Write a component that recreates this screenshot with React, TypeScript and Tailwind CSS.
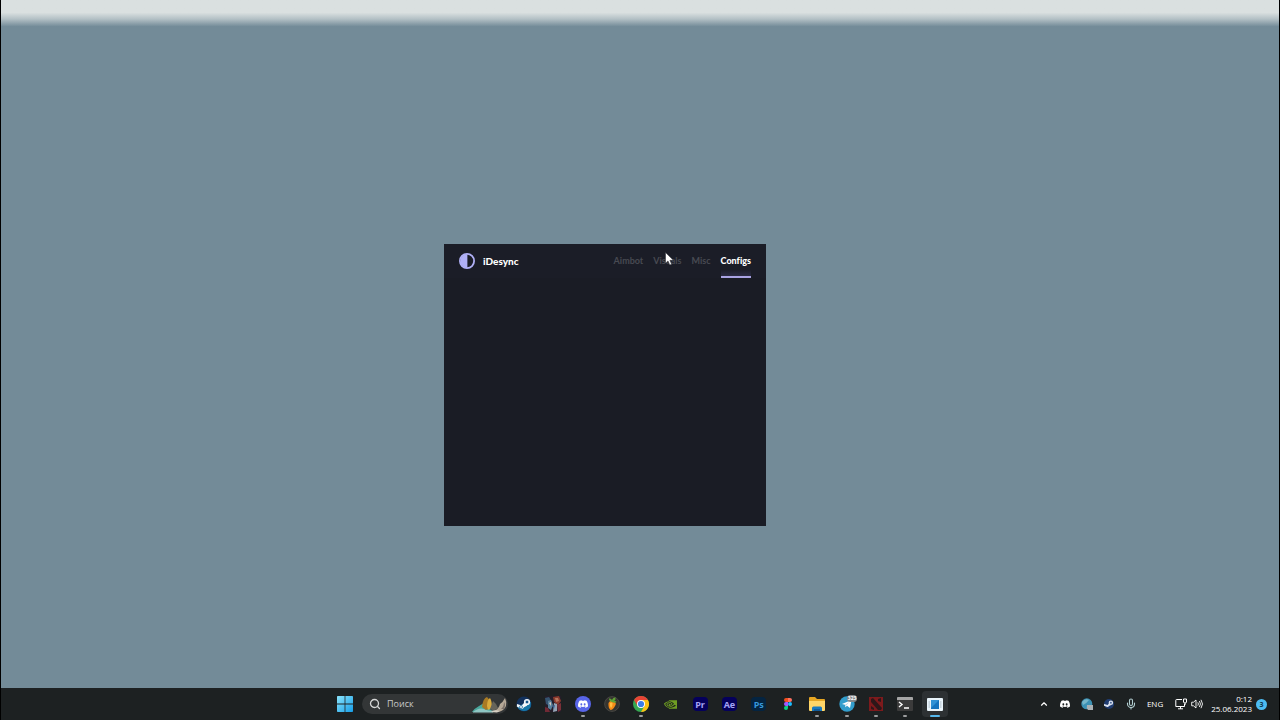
import React, { useState } from "react";
import { ChevronUp, Mic, Search } from "lucide-react";
import { SiDiscord, SiNvidia, SiSteam } from "react-icons/si";

const tabs = ["Aimbot", "Visuals", "Misc", "Configs"];

function StartIcon() {
  return (
    <svg viewBox="0 0 16 16" className="h-4 w-4">
      <defs>
        <linearGradient id="win" x1="0" y1="0" x2="1" y2="1">
          <stop offset="0" stopColor="#8be4fb" />
          <stop offset="1" stopColor="#169ee8" />
        </linearGradient>
      </defs>
      <path
        fill="url(#win)"
        d="M.8 0H7.6V7.6H0V.8Q0 0 .8 0ZM8.4 0H15.2Q16 0 16 .8V7.6H8.4ZM0 8.4H7.6V16H.8Q0 16 0 15.2ZM8.4 8.4H16V15.2Q16 16 15.2 16H8.4Z"
      />
    </svg>
  );
}

function SearchArt() {
  return (
    <svg viewBox="0 0 38 20" className="h-5 w-[38px]">
      <path d="M2 18Q5 14 9 12L14 9L20 15L23 18H2Z" fill="#4aa79c" />
      <path d="M3 18Q9 13 14 15Q19 18 25 16L23 18.5H3Z" fill="#8fc6c3" />
      <path d="M12 13Q13 4 17 3Q20 5 20 14L16 16Z" fill="#a97a24" />
      <path d="M17 12Q17 6 20 4Q22 7 22 14L18 16Z" fill="#d9ab3c" />
      <path d="M20 15L23 7Q26 9 28 14L24 17Z" fill="#66645a" />
      <path d="M24 17Q29 15 30 10Q33 8 35 4Q37 8 36 12Q34 17 28 18Z" fill="#b5a896" />
      <path d="M31 15Q34 13 34 8Q36 11 34 15Z" fill="#7b7068" />
      <path d="M21 18Q24 15 30 17L27 18.5Z" fill="#d5cfc3" />
    </svg>
  );
}

function SteamIcon() {
  return (
    <svg viewBox="0 0 16 16" className="h-4 w-4">
      <circle cx="8" cy="8" r="7.5" fill="#12315c" />
      <path d="M1 10A7.4 7.4 0 0 0 14.6 11L15 6Z" fill="#1777a8" />
      <path d="M1 8L5.8 9.6L8.4 6.5L11.4 9.4L8 11.2Q6.6 14 4.2 12.2L.8 10.6Z" fill="#f4f8fb" />
      <circle cx="11" cy="6" r="3.1" fill="#f4f8fb" />
      <circle cx="11" cy="6" r="1.7" fill="#17578d" stroke="#f4f8fb" strokeWidth=".5" />
      <circle cx="5" cy="11" r="1.5" fill="none" stroke="#17639a" strokeWidth=".7" />
    </svg>
  );
}

function GameIcon() {
  return (
    <svg viewBox="0 0 16 16" className="h-4 w-4">
      <rect width="16" height="16" fill="#241d29" />
      <path d="M0 2L4 1L7 6L5 10L1 8Z" fill="#35536f" />
      <path d="M8 1L14 0L16 5L13 9L9 6Z" fill="#8b3a2d" />
      <path d="M10 2L13 2L14 5L11 6Z" fill="#b9765e" />
      <path d="M3 5L6 4L8 9L6 14L3 12Z" fill="#587f9a" />
      <path d="M4 7L6 6L6 10Z" fill="#d3c8bf" />
      <path d="M9 7L12 8L12 15L8 16Z" fill="#93a5b5" />
      <path d="M12 9L16 7V14L13 16Z" fill="#7a3038" />
      <path d="M0 11L3 12L5 16H0Z" fill="#702934" />
      <path d="M7 10L10 9L9 13Z" fill="#395f91" />
    </svg>
  );
}

function DiscordIcon() {
  return (
    <span className="flex h-4 w-4 items-center justify-center rounded-full bg-[#5865e8]">
      <SiDiscord className="h-[10px] w-[10px] text-white" />
    </span>
  );
}

function FruityIcon() {
  return (
    <svg viewBox="0 0 16 16" className="h-4 w-4">
      <circle cx="8" cy="8" r="7.4" fill="#34332f" stroke="#55534d" strokeWidth=".7" />
      <path d="M4.5 7Q6 4 10 5.2Q13 7 11 10Q9 14 6.5 14Q4 12 4.5 7Z" fill="#f58c17" />
      <path d="M6 7Q7 6 8.5 7Q8.5 11 7 12Q5.5 10 6 7Z" fill="#ffc042" />
      <path d="M8 6Q5 5 5 2.5Q7 2 8 4Q9 1 11.5 1.5Q12 4 10 5Q12 4.5 12.5 6Q10.5 7.5 8 6Z" fill="#60a436" />
    </svg>
  );
}

function ChromeIcon() {
  return (
    <svg viewBox="0 0 16 16" className="h-4 w-4">
      <circle cx="8" cy="8" r="8" fill="#36a852" />
      <path d="M1.07 4A8 8 0 0 1 14.93 4H8L4.54 10Z" fill="#e84435" />
      <path d="M14.93 4A8 8 0 0 1 8 16L11.46 10L8 4Z" fill="#fbc116" />
      <circle cx="8" cy="8" r="4" fill="#fff" />
      <circle cx="8" cy="8" r="3.1" fill="#3b7de9" />
    </svg>
  );
}

function FigmaIcon() {
  return (
    <svg viewBox="0 0 8 12" className="h-3 w-2">
      <path d="M2 0H4V4H2A2 2 0 0 1 2 0Z" fill="#f24e1e" />
      <path d="M4 0H6A2 2 0 0 1 6 4H4Z" fill="#ff7262" />
      <path d="M2 4H4V8H2A2 2 0 0 1 2 4Z" fill="#a259ff" />
      <circle cx="6" cy="6" r="2" fill="#1abcfe" />
      <path d="M2 8H4V10A2 2 0 1 1 2 8Z" fill="#0acf83" />
    </svg>
  );
}

function FolderIcon() {
  return (
    <svg viewBox="0 0 16 14" className="h-[14px] w-4">
      <path d="M0 1Q0 0 1 0H6L8 2H15Q16 2 16 3V13H0Z" fill="#e6a623" />
      <path d="M0 4H16V13Q16 14 15 14H1Q0 14 0 13Z" fill="#fed568" />
      <path d="M3 14V11Q3 9.5 4.5 9.5H11.5Q13 9.5 13 11V14Z" fill="#1879bf" />
      <path d="M5 12H11V14H5Z" fill="#125c9b" />
    </svg>
  );
}

function TelegramIcon() {
  return (
    <span className="relative">
      <svg viewBox="0 0 16 16" className="h-4 w-4">
        <circle cx="8" cy="8" r="7.7" fill="#329dcc" />
        <path d="M3 8L12.5 4L11 12L8 9.8L6.4 11.3L6 8.8Z" fill="#fff" />
        <path d="M6 8.8L10.5 6L7.2 9.4L6.4 11.3Z" fill="#b9d8e8" />
      </svg>
      <span className="absolute -top-px left-2 rounded-sm bg-[#84888b] px-px text-[5px] leading-[7px] font-bold text-white">
        323
      </span>
    </span>
  );
}

function DotaIcon() {
  return (
    <svg viewBox="0 0 16 16" className="h-4 w-4">
      <path d="M1 1L15 1L15 15L1 15Z" fill="#7d1a1c" />
      <path d="M3 3L5 2L14 12L13 14L10 14L3 6Z" fill="#2d1719" />
      <path d="M10 3L13 2L13 6L10 5ZM3 10L6 12L6 14L3 13Z" fill="#2d1719" />
    </svg>
  );
}

function TerminalIcon() {
  return (
    <svg viewBox="0 0 16 14" className="h-[14px] w-4">
      <rect width="16" height="14" rx="1" fill="#3b3b3b" />
      <path d="M0 3V1Q0 0 1 0H15Q16 0 16 1V3Z" fill="#a5a5a5" />
      <path d="M2 5L5 7.5L2 10M7 11H12" fill="none" stroke="#fff" strokeWidth="1.4" />
    </svg>
  );
}

function AppIcon() {
  return (
    <svg viewBox="0 0 16 13" className="h-[13px] w-4">
      <rect width="16" height="13" rx="1" fill="#e9f4fa" />
      <rect x="4" y="2" width="8" height="9" fill="#1473be" />
      <path d="M4 2H12L4 10Z" fill="#2f91d5" />
      <path d="M1.5 3H3V10H1.5ZM13 3H14.5V10H13Z" fill="#c7d4dd" />
    </svg>
  );
}

function AdobeIcon({ label, className }: { label: string; className: string }) {
  return (
    <span className={`flex h-[14px] w-[15px] items-center justify-center rounded-sm text-[9px] leading-none font-bold ${className}`}>
      {label}
    </span>
  );
}

const apps = [
  { name: "Steam", icon: <SteamIcon /> },
  { name: "Game", icon: <GameIcon /> },
  { name: "Discord", icon: <DiscordIcon />, running: true },
  { name: "FL Studio", icon: <FruityIcon /> },
  { name: "Chrome", icon: <ChromeIcon />, running: true },
  { name: "Nvidia", icon: <SiNvidia className="h-[13px] w-[13px] text-[#6f9d22]" /> },
  { name: "Premiere Pro", icon: <AdobeIcon label="Pr" className="bg-[#05005c] text-[#a5a5f5]" /> },
  { name: "After Effects", icon: <AdobeIcon label="Ae" className="bg-[#05005c] text-[#a5a5f5]" /> },
  { name: "Photoshop", icon: <AdobeIcon label="Ps" className="bg-[#042441] text-[#3699dc]" /> },
  { name: "Figma", icon: <FigmaIcon /> },
  { name: "Explorer", icon: <FolderIcon />, running: true },
  { name: "Telegram", icon: <TelegramIcon />, running: true },
  { name: "Dota 2", icon: <DotaIcon />, running: true },
  { name: "Terminal", icon: <TerminalIcon />, running: true },
  { name: "iDesync", icon: <AppIcon />, active: true },
];

function CheatWindow() {
  const [active, setActive] = useState("Configs");

  return (
    <section className="absolute top-[244px] left-[443px] h-[282px] w-[322px] bg-[#1a1c25] font-['Lato',sans-serif]">
      <header className="flex h-[34px] items-center justify-between bg-[#1b1d27] px-[15px]">
        <div className="flex items-center gap-2">
          <svg viewBox="0 0 16 16" className="h-4 w-4">
            <circle cx="8" cy="8" r="7.1" fill="none" stroke="#b0b0f6" strokeWidth="1.8" />
            <path d="M8.4 1A7 7 0 0 0 8.4 15Z" fill="#b0b0f6" />
          </svg>
          <h1 className="text-[10px] leading-4 font-black text-white">iDesync</h1>
        </div>
        <nav className="flex h-full gap-[10px] [font-variant-ligatures:none]">
          {tabs.map((tab) => (
            <button
              key={tab}
              onClick={() => setActive(tab)}
              className={
                tab === active
                  ? "h-full border-b-2 border-[#aaa3e3] bg-linear-to-t from-[#2b2b42] to-transparent to-20% pt-[2px] text-[9px] font-black text-white"
                  : "h-full border-b-2 border-transparent pt-[2px] text-[9px] font-bold text-[#484a52]"
              }
            >
              {tab}
            </button>
          ))}
        </nav>
      </header>
    </section>
  );
}

function Taskbar() {
  return (
    <footer className="grid h-8 grid-cols-[1fr_auto_1fr] items-center bg-[#1d2122] font-['Open_Sans','Noto_Sans',sans-serif] text-white">
      <div />

      <div className="flex items-center">
        <button aria-label="Start" className="flex w-[30px] justify-start pl-[5px]">
          <StartIcon />
        </button>
        <label className="flex h-5 w-[146px] items-center overflow-hidden rounded-full bg-[#333637] pl-[7px]">
          <Search className="h-3 w-3 shrink-0 text-[#d5d6d6]" strokeWidth={2.6} />
          <input
            aria-label="Поиск"
            placeholder="Поиск"
            className="ml-[6px] min-w-0 flex-1 bg-transparent text-[9px] outline-none placeholder:text-[#c9cacb]"
          />
          <SearchArt />
        </label>
        <div className="ml-[3px] flex w-[437px] justify-between">
          {apps.map((app) => (
            <button
              key={app.name}
              aria-label={app.name}
              className={`relative flex h-[26px] w-[26px] items-center justify-center rounded-sm ${app.active ? "bg-[#2d3133]" : ""}`}
            >
              {app.icon}
              {app.running && (
                <span className="absolute bottom-0 left-[11px] h-[2px] w-1 rounded-full bg-[#9b9d9e]" />
              )}
              {app.active && (
                <span className="absolute bottom-0 left-2 h-[2px] w-[10px] rounded-full bg-[#56b9ee]" />
              )}
            </button>
          ))}
        </div>
      </div>

      <div className="flex items-center justify-end pr-3">
        <div className="flex items-center gap-[11px]">
          <ChevronUp className="h-[10px] w-[10px]" strokeWidth={2.8} />
          <SiDiscord className="h-[10px] w-[10px]" />
          <svg viewBox="0 0 12 12" className="h-3 w-3">
            <circle cx="5.8" cy="5.8" r="5.5" fill="#3c91b4" />
            <path d="M1 4Q4 0 8 2Q6 5 2 7Z" fill="#76b6ca" />
            <path d="M6 7H12V12H7Q5 10 6 7Z" fill="#a9b1b5" />
          </svg>
          <svg viewBox="0 0 16 16" className="h-[10px] w-[10px]">
            <circle cx="8" cy="8" r="8" fill="#203c70" />
            <path d="M0 8L5.8 9.6L8.4 6.5L11.4 9.4L8 11.2Q6.6 14 4.2 12.2L0 10.6Z" fill="#dce3f0" />
            <circle cx="11" cy="6" r="3.6" fill="#dce3f0" />
            <circle cx="11" cy="6" r="1.6" fill="#4b6797" />
          </svg>
          <Mic className="h-3 w-3 text-[#b3cfd2]" strokeWidth={2.2} />
        </div>
        <span className="ml-[10px] text-[8px]">ENG</span>
        <div className="ml-3 flex items-center gap-1">
          <svg viewBox="0 0 12 12" className="h-3 w-3" fill="none" stroke="#fff" strokeWidth="1">
            <path d="M7 1.5H1.5Q.8 1.5 .8 2.2V8.5H9.5V6M3 10.8H8M5.5 8.5V10.8M8.5 1H11.5V4Q11.5 5 10 5Q8.5 5 8.5 4ZM10 5V7" />
          </svg>
          <svg viewBox="0 0 12 12" className="h-3 w-3" fill="none" stroke="#fff" strokeWidth=".9">
            <path d="M.7 4.2H2.5L5 2V10L2.5 7.8H.7ZM6.8 4.4Q8 6 6.8 7.6M8.4 3Q10.5 6 8.4 9M10 1.8Q13 6 10 10.2" />
          </svg>
        </div>
        <div className="ml-2 text-right text-[8px] leading-[10px]">
          <div>0:12</div>
          <div>25.06.2023</div>
        </div>
        <span className="ml-1 flex h-[11px] w-[11px] items-center justify-center rounded-full bg-[#4dbcf2] text-[7px] leading-none font-bold text-[#12354a]">
          3
        </span>
      </div>
    </footer>
  );
}

export default function App() {
  return (
    <div className="flex min-h-screen flex-col border-x border-black bg-[#738b98]">
      <main className="relative flex-1">
        {/* blurred strip along the top edge */}
        <div className="h-7 bg-linear-to-b from-[#dae0e0] from-45% via-[#b3c0c5] via-68% to-[#738b98] to-95%" />
        <CheatWindow />
        {/* mouse pointer */}
        <svg viewBox="0 0 9 14" className="absolute top-[252px] left-[664px] h-[14px] w-[9px]">
          <path d="M.5 .5V11.2L3 8.9L4.8 13L6.6 12.2L4.9 8.3H8.4Z" fill="#fff" stroke="#22242c" strokeWidth=".5" />
        </svg>
      </main>
      <Taskbar />
    </div>
  );
}
